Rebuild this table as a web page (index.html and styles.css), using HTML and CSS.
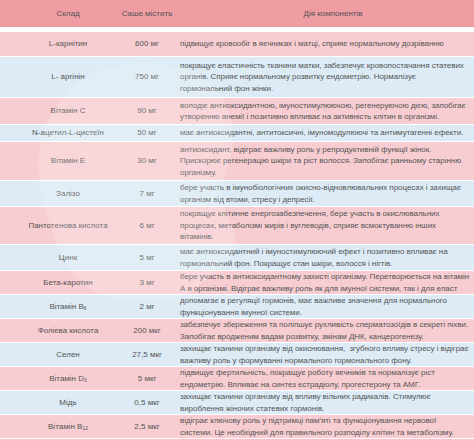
FILE: index.html
```html
<!DOCTYPE html>
<html lang="uk">
<head>
<meta charset="utf-8">
<link rel="stylesheet" href="styles.css">
</head>
<body>
<div class="wrap">
<table class="tbl">
  <colgroup><col class="c1"><col class="c2"><col class="c3"></colgroup>
  <thead>
    <tr class="head"><th class="n">Склад</th><th class="q">Саше містить</th><th class="d">Дія компонентів</th></tr>
  </thead>
  <tbody>
    <tr class="pink h25"><td class="n">L-карнітин</td><td class="q">600 мг</td><td class="d">підвищує кровообіг в яєчниках і матці, сприяє нормальному дозріванню</td></tr>
    <tr class="blue h41"><td class="n">L- аргінін</td><td class="q">750 мг</td><td class="d">покращує еластичність тканини матки, забезпечує кровопостачання статевих<br>органів. Сприяє нормальному розвитку ендометрію. Нормалізує<br>гормональний фон жінки.</td></tr>
    <tr class="pink h27"><td class="n">Вітамін С</td><td class="q">90 мг</td><td class="d">володіє антиоксидантною, імуностимулюючою, регенеруючою дією, запобігає<br>утворенню анемії і позитивно впливає на активність клітин в організмі.</td></tr>
    <tr class="blue h17"><td class="n">N-ацетил-L-цистеїн</td><td class="q">50 мг</td><td class="d">має антиоксидантні, антитоксичні, імуномодулюючі та антимутагенні ефекти.</td></tr>
    <tr class="pink h39"><td class="n">Вітамін Е</td><td class="q">30 мг</td><td class="d">антиоксидант, відіграє важливу роль у репродуктивній функції жінок.<br>Прискорює регенерацію шкіри та ріст волосся. Запобігає ранньому старінню<br>організму.</td></tr>
    <tr class="blue h26"><td class="n">Залізо</td><td class="q">7 мг</td><td class="d">бере участь в імунобіологічних окисно-відновлювальних процесах і захищає<br>організм від втоми, стресу і депресії.</td></tr>
    <tr class="pink h38"><td class="n">Пантотенова кислота</td><td class="q">6 мг</td><td class="d">покращує клітинне енергозабезпечення, бере участь в окислювальних<br>процесах, метаболізмі жирів і вуглеводів, сприяє всмоктуванню інших<br>вітамінів.</td></tr>
    <tr class="blue h26"><td class="n">Цинк</td><td class="q">5 мг</td><td class="d">має антиоксидантний і імуностимулюючий ефект і позитивно впливає на<br>гормональний фон. Покращує стан шкіри, волосся і нігтів.</td></tr>
    <tr class="pink h24"><td class="n">Бета-каротин</td><td class="q">3 мг</td><td class="d">бере участь в антиоксидантному захисті організму. Перетворюється на вітамін<br>А в організмі. Відіграє важливу роль як для імунної системи, так і для еласт</td></tr>
    <tr class="blue h24"><td class="n">Вітамін B<sub>6</sub></td><td class="q">2 мг</td><td class="d">допомагає в регуляції гормонів, має важливе значення для нормального<br>функціонування імунної системи.</td></tr>
    <tr class="pink h24"><td class="n">Фолієва кислота</td><td class="q">200 мкг</td><td class="d">забезпечує збереження та поліпшує рухливість сперматозоїдів в секреті піхви.<br>Запобігає вродженим вадам розвитку, змінам ДНК, канцерогенезу.</td></tr>
    <tr class="blue h24"><td class="n">Селен</td><td class="q">27,5 мкг</td><td class="d">захищає тканини організму від окиснювання,&nbsp; згубного впливу стресу і відіграє<br>важливу роль у формуванні нормального гормонального фону.</td></tr>
    <tr class="pink h24"><td class="n">Вітамін D<sub>3</sub></td><td class="q">5 мкг</td><td class="d">підвищує фертильність, покращує роботу яєчників та нормалізує ріст<br>ендометрію. Впливає на синтез естрадіолу, прогестерону та АМГ.</td></tr>
    <tr class="blue h24"><td class="n">Мідь</td><td class="q">0,5 мкг</td><td class="d">захищає тканини організму від впливу вільних радикалів. Стимулює<br>вироблення жіночих статевих гормонів.</td></tr>
    <tr class="pink h24"><td class="n">Вітамін B<sub>12</sub></td><td class="q">2,5 мкг</td><td class="d">відіграє ключову роль у підтримці пам'яті та функціонування нервової<br>системи. Це необхідний для правильного розподілу клітин та метаболізму.</td></tr>
  </tbody>
</table>
<svg class="watermark" width="474" height="439" viewBox="0 0 474 439" aria-hidden="true">
  <path d="M70 90 C 95 60, 160 55, 200 75 C 235 95, 240 140, 225 175 C 215 200, 230 215, 235 235 C 240 260, 215 270, 200 285 C 185 300, 150 305, 120 300 C 90 295, 70 275, 60 250 C 45 215, 35 180, 40 145 C 45 120, 55 105, 70 90 Z" fill="#ffffff" opacity="0.18"/>
</svg>
</div>
</body>
</html>
```
FILE: styles.css
```css
html, body {
  margin: 0;
  padding: 0;
  background: #ffffff;
}
body {
  width: 474px;
  height: 439px;
  overflow: hidden;
  font-family: "Liberation Sans", Arial, sans-serif;
  font-size: 8px;
  color: #555555;
}
.wrap {
  position: relative;
  width: 474px;
}
.tbl {
  width: 474px;
  table-layout: fixed;
  border-collapse: separate;
  border-spacing: 0;
}
.c1 { width: 120px; }
.c2 { width: 54px; }
.tbl th, .tbl td {
  padding: 0;
  line-height: 11.5px;
  vertical-align: middle;
  border-bottom: 1px solid #ffffff;
  font-weight: normal;
}
.head th {
  background: #f09ca3;
  height: 27px;
  padding: 0;
  border-bottom: 5px solid #ffffff;
}
.n { text-align: center; padding-left: 16px !important; }
.q { text-align: center; }
.d { text-align: left; padding-left: 6px !important; white-space: nowrap; overflow: hidden; letter-spacing: -0.05px; }
.head .d { text-align: center; padding-left: 18px !important; letter-spacing: 0; }
.pink td { background: #f8cdd2; }
.blue td { background: #dcebf5; }
.h24 { height: 24px; }
.h25 { height: 25px; }
.h26 { height: 26px; }
.h27 { height: 27px; }
.h17 { height: 17px; }
.h38 { height: 38px; }
.h39 { height: 39px; }
.h41 { height: 41px; }
sub {
  font-size: 5px;
  line-height: 0;
  vertical-align: -1px;
}
.watermark {
  position: absolute;
  left: 0;
  top: 0;
  pointer-events: none;
}
```
